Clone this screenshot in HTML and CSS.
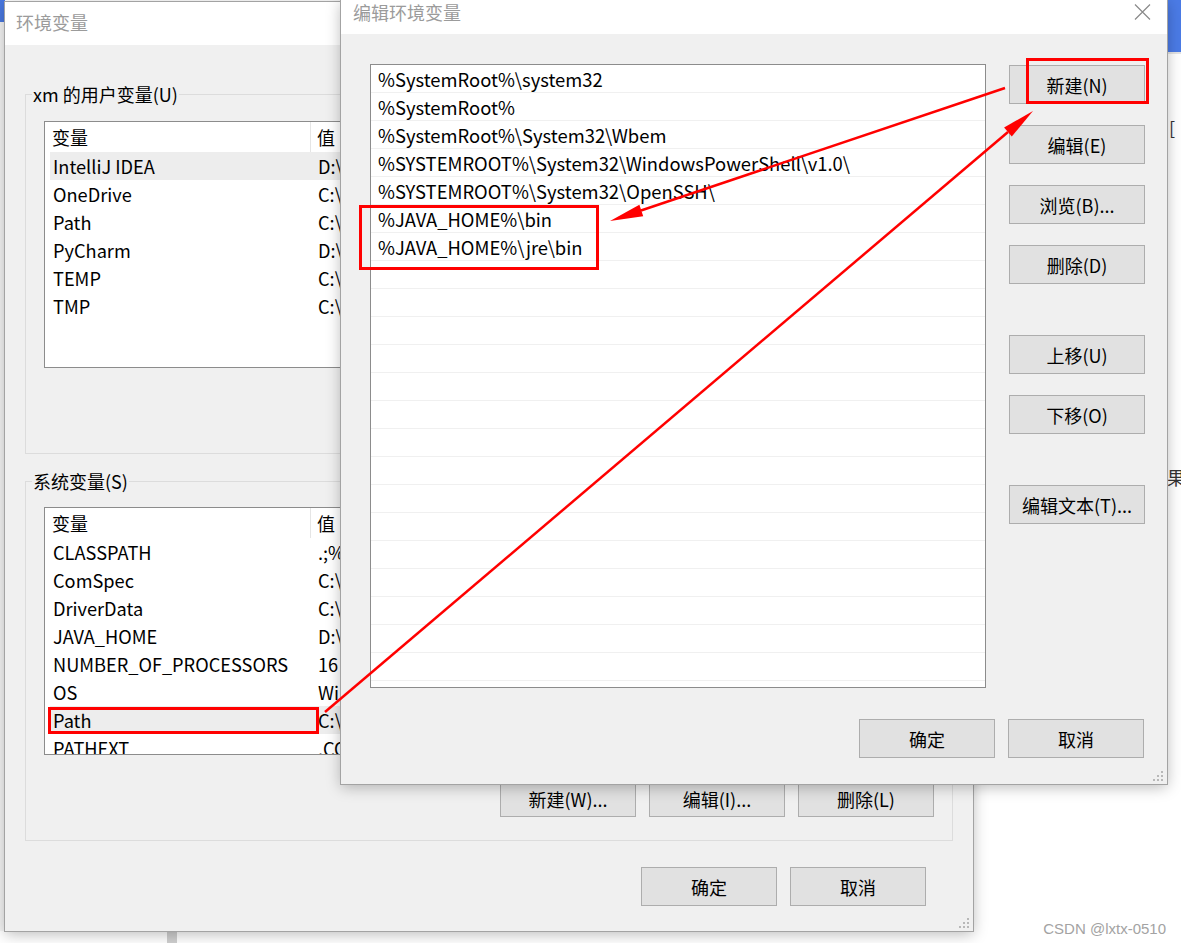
FILE: index.html
```html
<!DOCTYPE html>
<html lang="zh-CN">
<head>
    <meta charset="UTF-8">
    <title>编辑环境变量</title>
    <link rel="stylesheet" href="styles.css">
</head>
<body>

<div class="desktop">
    <div class="edge-left"><div class="edge-blue"></div></div>
    <div class="edge-right">
        <div class="edge-blue"></div>
        <span class="edge-glyph glyph-top">[</span>
        <span class="edge-glyph glyph-mid">果</span>
    </div>
    <div class="bottom-bar"></div>

    <!-- 环境变量 -->
    <div class="window env-window">
        <div class="titlebar">
            <span class="title">环境变量</span>
        </div>
        <div class="env-body">
            <fieldset class="group user-group">
                <legend>xm 的用户变量(U)</legend>
                <div class="varlist user-list">
                    <div class="varlist-head"><span class="head-name">变量</span><span class="head-value">值</span></div>
                    <div class="var-row selected"><span class="col-name">IntelliJ IDEA</span><span class="col-value">D:\Program Files\JetBrains\IntelliJ IDEA\bin;</span></div>
                    <div class="var-row"><span class="col-name">OneDrive</span><span class="col-value">C:\Users\xm\OneDrive</span></div>
                    <div class="var-row"><span class="col-name">Path</span><span class="col-value">C:\Users\xm\AppData\Local\Microsoft\WindowsApps;</span></div>
                    <div class="var-row"><span class="col-name">PyCharm</span><span class="col-value">D:\Program Files\JetBrains\PyCharm\bin;</span></div>
                    <div class="var-row"><span class="col-name">TEMP</span><span class="col-value">C:\Users\xm\AppData\Local\Temp</span></div>
                    <div class="var-row"><span class="col-name">TMP</span><span class="col-value">C:\Users\xm\AppData\Local\Temp</span></div>
                </div>
            </fieldset>

            <fieldset class="group sys-group">
                <legend>系统变量(S)</legend>
                <div class="varlist sys-list">
                    <div class="varlist-head"><span class="head-name">变量</span><span class="head-value">值</span></div>
                    <div class="var-row"><span class="col-name">CLASSPATH</span><span class="col-value">.;%JAVA_HOME%\lib\dt.jar;</span></div>
                    <div class="var-row"><span class="col-name">ComSpec</span><span class="col-value">C:\Windows\system32\cmd.exe</span></div>
                    <div class="var-row"><span class="col-name">DriverData</span><span class="col-value">C:\Windows\System32\Drivers\DriverData</span></div>
                    <div class="var-row"><span class="col-name">JAVA_HOME</span><span class="col-value">D:\Java\jdk1.8</span></div>
                    <div class="var-row"><span class="col-name">NUMBER_OF_PROCESSORS</span><span class="col-value">16</span></div>
                    <div class="var-row"><span class="col-name">OS</span><span class="col-value">Windows_NT</span></div>
                    <div class="var-row selected"><span class="col-name">Path</span><span class="col-value">C:\Windows\system32;</span></div>
                    <div class="var-row"><span class="col-name">PATHEXT</span><span class="col-value">.COM;.EXE;.BAT;.CMD</span></div>
                </div>
                <div class="button-row">
                    <button class="btn">新建(W)...</button>
                    <button class="btn">编辑(I)...</button>
                    <button class="btn">删除(L)</button>
                </div>
            </fieldset>

            <div class="dialog-buttons env-buttons">
                <button class="btn">确定</button>
                <button class="btn">取消</button>
            </div>
        </div>
        <svg class="grip" width="10" height="10" viewBox="0 0 10 10">
            <rect x="8" y="0" width="2" height="2"/>
            <rect x="4" y="4" width="2" height="2"/><rect x="8" y="4" width="2" height="2"/>
            <rect x="0" y="8" width="2" height="2"/><rect x="4" y="8" width="2" height="2"/><rect x="8" y="8" width="2" height="2"/>
        </svg>
    </div>

    <!-- 编辑环境变量 -->
    <div class="window edit-window">
        <div class="titlebar edit-titlebar">
            <span class="title">编辑环境变量</span>
            <svg class="close-icon" width="17" height="16" viewBox="0 0 17 16">
                <path d="M1 0.5 L16 15.5 M16 0.5 L1 15.5" stroke="#8a8a8a" stroke-width="1.2" fill="none"/>
            </svg>
        </div>
        <div class="edit-body">
            <div class="edit-main">
                <div class="path-list">
                    <div class="path-row">%SystemRoot%\system32</div>
                    <div class="path-row">%SystemRoot%</div>
                    <div class="path-row">%SystemRoot%\System32\Wbem</div>
                    <div class="path-row">%SYSTEMROOT%\System32\WindowsPowerShell\v1.0\</div>
                    <div class="path-row">%SYSTEMROOT%\System32\OpenSSH\</div>
                    <div class="path-row">%JAVA_HOME%\bin</div>
                    <div class="path-row">%JAVA_HOME%\jre\bin</div>
                    <div class="path-row"></div><div class="path-row"></div><div class="path-row"></div>
                    <div class="path-row"></div><div class="path-row"></div><div class="path-row"></div>
                    <div class="path-row"></div><div class="path-row"></div><div class="path-row"></div>
                    <div class="path-row"></div><div class="path-row"></div><div class="path-row"></div>
                    <div class="path-row"></div><div class="path-row"></div><div class="path-row"></div>
                    <div class="path-row"></div>
                </div>
                <div class="side-buttons">
                    <button class="btn">新建(N)</button>
                    <button class="btn">编辑(E)</button>
                    <button class="btn">浏览(B)...</button>
                    <button class="btn">删除(D)</button>
                    <button class="btn spaced">上移(U)</button>
                    <button class="btn">下移(O)</button>
                    <button class="btn spaced">编辑文本(T)...</button>
                </div>
            </div>
            <div class="dialog-buttons edit-buttons">
                <button class="btn">确定</button>
                <button class="btn">取消</button>
            </div>
        </div>
        <svg class="grip" width="10" height="10" viewBox="0 0 10 10">
            <rect x="8" y="0" width="2" height="2"/>
            <rect x="4" y="4" width="2" height="2"/><rect x="8" y="4" width="2" height="2"/>
            <rect x="0" y="8" width="2" height="2"/><rect x="4" y="8" width="2" height="2"/><rect x="8" y="8" width="2" height="2"/>
        </svg>
    </div>

    <!-- 标注 -->
    <svg class="annotations" width="1181" height="943" viewBox="0 0 1181 943">
        <g fill="none" stroke="#ff0000" stroke-width="3">
            <rect x="49.5" y="708.5" width="268" height="24"/>
            <rect x="360.5" y="206.5" width="237" height="62"/>
            <rect x="1027.5" y="59.5" width="120" height="43"/>
        </g>
        <g stroke="#ff0000" stroke-width="2.5" fill="none">
            <line x1="1005" y1="88" x2="641" y2="210.5"/>
            <line x1="325" y1="712" x2="1008" y2="132"/>
        </g>
        <g fill="#ff0000">
            <polygon points="610,221 643.2,216.2 639.4,204.8"/>
            <polygon points="1033,111 1011.8,136.6 1004.1,127.4"/>
        </g>
    </svg>

    <div class="watermark">CSDN @lxtx-0510</div>
</div>

</body>
</html>
```

FILE: styles.css
```css
body {
    margin: 0;
    font-family: "Noto Sans CJK SC", sans-serif;
    font-size: 18px;
    color: #000;
    background: #fff;
}

.desktop {
    position: relative;
    width: 1181px;
    height: 943px;
    overflow: hidden;
    background: #fff;
}

/* 背后的窗口边角 */
.edge-left {
    position: absolute;
    left: 0;
    top: 0;
    width: 5px;
    height: 931px;
    background: #f4f4f4;
}

.edge-left .edge-blue {
    height: 22px;
    background: #4a78e0;
}

.edge-right {
    position: absolute;
    left: 1167px;
    top: 0;
    width: 14px;
    height: 943px;
    background: #fff;
}

.edge-right .edge-blue {
    height: 52px;
    background: #4b7be6;
    border-bottom: 2px solid #e4e4e4;
}

.edge-glyph {
    position: absolute;
    left: 2px;
    font-size: 18px;
    color: #333;
}

.glyph-top { top: 114px; }
.glyph-mid { top: 464px; left: 0; }

.bottom-bar {
    position: absolute;
    left: 167px;
    top: 931px;
    width: 10px;
    height: 12px;
    background: #cfcfcf;
}

/* 窗口 */
.window {
    position: absolute;
    background: #f0f0f0;
    box-sizing: border-box;
    box-shadow: 0 0 0 1px #a3a3a3, 0 3px 14px rgba(0, 0, 0, 0.28);
}

.titlebar {
    background: #fff;
    display: flex;
    justify-content: space-between;
}

.title {
    color: #9b9b9b;
    line-height: 24px;
}

.grip {
    position: absolute;
    right: 4px;
    bottom: 3px;
    fill: #b8b8b8;
}

.btn {
    width: 136px;
    height: 39px;
    padding: 0;
    background: #e1e1e1;
    border: 1px solid #adadad;
    border-radius: 0;
    font-family: inherit;
    font-size: 18px;
    color: #000;
}

.dialog-buttons {
    display: flex;
    justify-content: flex-end;
    gap: 13px;
}

/* 环境变量 */
.env-window {
    left: 5px;
    top: 2px;
    width: 968px;
    height: 929px;
}

.env-window .titlebar {
    height: 43px;
    padding: 8px 0 0 11px;
    box-sizing: border-box;
}

.env-body {
    padding: 36px 20px 0 20px;
}

.group {
    margin: 0;
    padding: 14px 18px 85px;
    border: 1px solid #dcdcdc;
    min-width: 0;
}

.group legend {
    line-height: 26px;
    padding: 0 1px;
    margin-left: -12px;
}

.sys-group {
    margin-top: 14px;
    padding: 13px 18px 23px;
}

.varlist {
    background: #fff;
    border: 1px solid #8c8c8c;
    box-sizing: border-box;
    overflow: hidden;
}

.user-list { height: 247px; }
.sys-list { height: 248px; }

.varlist-head {
    display: flex;
    height: 30px;
    line-height: 30px;
}

.head-name {
    width: 266px;
    padding-left: 7px;
    box-sizing: border-box;
    border-right: 1px solid #e5e5e5;
}

.head-value {
    padding-left: 6px;
}

.var-row {
    display: flex;
    height: 28px;
    line-height: 28px;
    margin-left: 5px;
    font-size: 18.2px;
    white-space: nowrap;
}

.var-row.selected {
    background: #ededed;
}

.col-name {
    width: 261px;
    flex: none;
    padding-left: 3px;
    box-sizing: border-box;
}

.col-value {
    padding-left: 7px;
}

.button-row {
    display: flex;
    justify-content: flex-end;
    gap: 13px;
    margin-top: 25px;
}

.button-row .btn {
    height: 37px;
}

.env-buttons {
    margin-top: 26px;
    padding-right: 27px;
}

/* 编辑环境变量 */
.edit-window {
    left: 341px;
    top: 0;
    width: 826px;
    height: 784px;
}

.edit-titlebar {
    height: 34px;
    padding-left: 12px;
}

.close-icon {
    margin: 4px 16px 0 0;
}

.edit-body {
    padding: 30px 22px 0 29px;
}

.edit-main {
    display: flex;
    align-items: flex-start;
}

.path-list {
    width: 616px;
    height: 624px;
    background: #fff;
    border: 1px solid #8c8c8c;
    box-sizing: border-box;
    overflow: hidden;
}

.path-row {
    height: 28px;
    line-height: 28px;
    padding-left: 7px;
    border-bottom: 1px solid #f0f0f0;
    box-sizing: border-box;
    font-size: 18.4px;
    white-space: nowrap;
}

.side-buttons {
    display: flex;
    flex-direction: column;
    gap: 21px;
    margin: 1px 0 0 23px;
}

.side-buttons .spaced {
    margin-top: 30px;
}

.edit-buttons {
    margin-top: 31px;
    padding-right: 1px;
}

/* 标注 */
.annotations {
    position: absolute;
    left: 0;
    top: 0;
    pointer-events: none;
}

.watermark {
    position: absolute;
    right: 15px;
    bottom: 6px;
    font-family: "Liberation Sans", sans-serif;
    font-size: 15px;
    color: #a3a3a3;
}
```
